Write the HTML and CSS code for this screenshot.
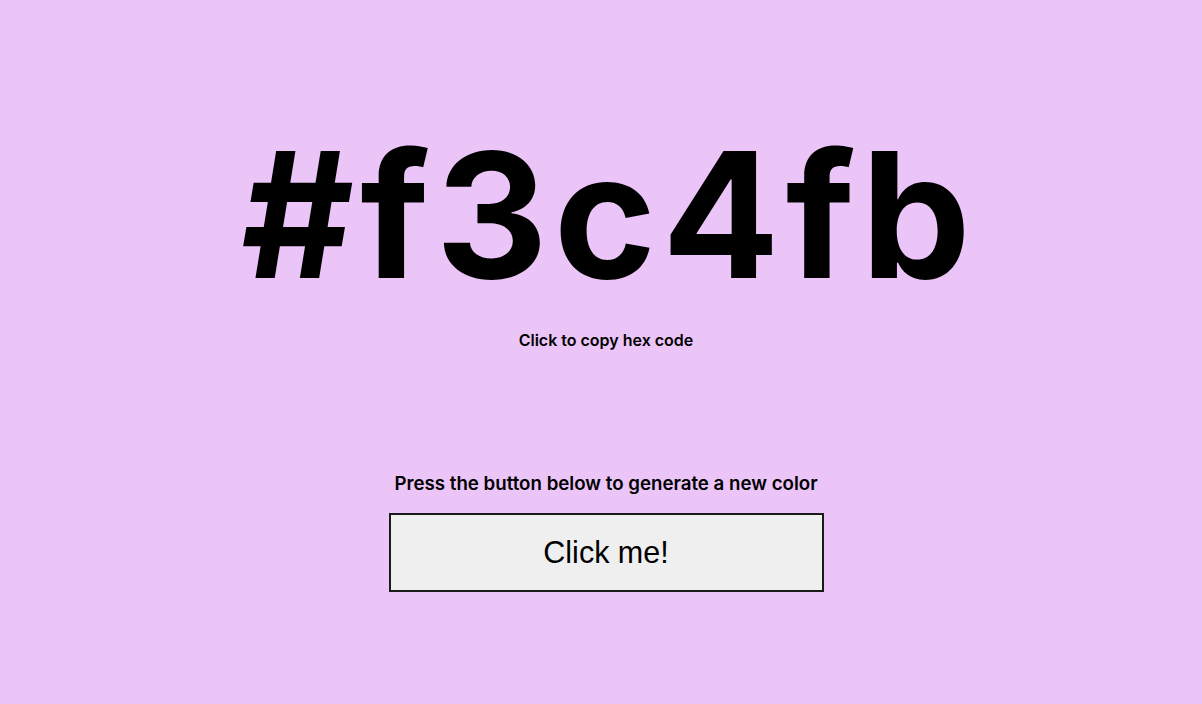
FILE: index.html
```html
<!DOCTYPE html>
<html>
<head>
<meta charset="utf-8">
<link rel="stylesheet" href="styles.css">
</head>
<body>
<main class="page">
  <section class="hex-block">
    <h1 class="hex">#f3c4fb</h1>
    <p class="copy">Click to copy hex code</p>
  </section>
  <section class="gen-block">
    <p class="prompt">Press the button below to generate a new color</p>
    <button class="btn">Click me!</button>
  </section>
</main>
</body>
</html>
```
FILE: styles.css
```css
html, body {
  margin: 0;
  padding: 0;
}
body {
  background: #ecc5f8;
  font-family: Inter, "Liberation Sans", sans-serif;
  color: #000;
  width: 1202px;
  height: 704px;
  overflow: hidden;
}
.page {
  display: flex;
  flex-direction: column;
  align-items: center;
  padding-left: 10px;
}
.hex-block {
  display: flex;
  flex-direction: column;
  align-items: center;
  padding-top: 115px;
}
.hex {
  margin: 0;
  font-family: Inter, "Liberation Sans", sans-serif;
  font-weight: 700;
  font-size: 174px;
  line-height: 200px;
  letter-spacing: 6px;
  padding-left: 6px;
}
.copy {
  margin: 15px 0 0;
  font-size: 16px;
  font-weight: 600;
}
.gen-block {
  display: flex;
  flex-direction: column;
  align-items: center;
  margin-top: 122px;
}
.prompt {
  margin: 0;
  font-size: 18.7px;
  font-weight: 600;
}
.btn {
  margin-top: 18px;
  width: 435px;
  height: 79px;
  background: #efefef;
  border: 2px solid #1a1a1a;
  border-radius: 0;
  font-family: "Liberation Sans", Arial, sans-serif;
  font-size: 30.5px;
  color: #000;
  padding: 0;
}
```
